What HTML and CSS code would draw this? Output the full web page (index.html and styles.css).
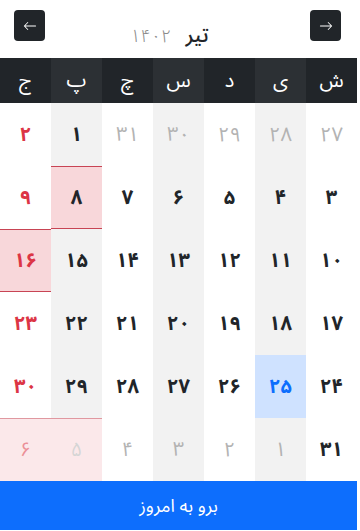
FILE: index.html
```html
<!DOCTYPE html>
<html lang="fa" dir="rtl">
<head>
    <meta charset="UTF-8">
    <meta name="viewport" content="width=device-width, initial-scale=1.0">
    <title>تقویم</title>
    <link rel="stylesheet" href="styles.css">
</head>
<body>
    <div class="calendar">
        <div class="cal-header">
            <button class="nav-btn" title="ماه بعد">
                <svg width="14" height="14" viewBox="0 0 16 16" fill="currentColor"><path d="M1 8a.5.5 0 0 1 .5-.5h11.793l-3.147-3.146a.5.5 0 0 1 .708-.708l4 4a.5.5 0 0 1 0 .708l-4 4a.5.5 0 0 1-.708-.708L13.293 8.5H1.5A.5.5 0 0 1 1 8z"/></svg>
            </button>
            <div class="cal-title">
                <span class="month">تیر</span>
                <span class="year">۱۴۰۲</span>
            </div>
            <button class="nav-btn" title="ماه قبل">
                <svg width="14" height="14" viewBox="0 0 16 16" fill="currentColor"><path d="M15 8a.5.5 0 0 0-.5-.5H2.707l3.147-3.146a.5.5 0 1 0-.708-.708l-4 4a.5.5 0 0 0 0 .708l4 4a.5.5 0 0 0 .708-.708L2.707 8.5H14.5A.5.5 0 0 0 15 8z"/></svg>
            </button>
        </div>

        <div class="weekdays">
            <div>ش</div><div>ی</div><div>د</div><div>س</div><div>چ</div><div>پ</div><div>ج</div>
        </div>

        <div class="days">
            <div class="day other">۲۷</div>
            <div class="day other">۲۸</div>
            <div class="day other">۲۹</div>
            <div class="day other">۳۰</div>
            <div class="day other">۳۱</div>
            <div class="day">۱</div>
            <div class="day friday">۲</div>

            <div class="day">۳</div>
            <div class="day">۴</div>
            <div class="day">۵</div>
            <div class="day">۶</div>
            <div class="day">۷</div>
            <div class="day holiday">۸</div>
            <div class="day friday">۹</div>

            <div class="day">۱۰</div>
            <div class="day">۱۱</div>
            <div class="day">۱۲</div>
            <div class="day">۱۳</div>
            <div class="day">۱۴</div>
            <div class="day">۱۵</div>
            <div class="day friday holiday">۱۶</div>

            <div class="day">۱۷</div>
            <div class="day">۱۸</div>
            <div class="day">۱۹</div>
            <div class="day">۲۰</div>
            <div class="day">۲۱</div>
            <div class="day">۲۲</div>
            <div class="day friday">۲۳</div>

            <div class="day">۲۴</div>
            <div class="day today">۲۵</div>
            <div class="day">۲۶</div>
            <div class="day">۲۷</div>
            <div class="day">۲۸</div>
            <div class="day">۲۹</div>
            <div class="day friday">۳۰</div>

            <div class="day">۳۱</div>
            <div class="day other">۱</div>
            <div class="day other">۲</div>
            <div class="day other">۳</div>
            <div class="day other">۴</div>
            <div class="day other holiday">۵</div>
            <div class="day other friday holiday">۶</div>
        </div>

        <button class="today-btn">برو به امروز</button>
    </div>
</body>
</html>
```

FILE: styles.css
```css
/* Reset */
* {
    box-sizing: border-box;
}

body {
    margin: 0;
    background: #fff;
    font-family: "Noto Sans Arabic", "DejaVu Sans", sans-serif;
    color: #212529;
}

.calendar {
    width: 357px;
    margin-left: 0;
    margin-right: auto;
}

/* Header */
.cal-header {
    height: 58px;
    display: flex;
    align-items: flex-start;
    justify-content: space-between;
    padding: 10px 16px 0 14px;
}

.nav-btn {
    width: 31px;
    height: 31px;
    border: none;
    border-radius: 4px;
    background: #212529;
    color: #fff;
    display: flex;
    align-items: center;
    justify-content: center;
    padding: 0;
    cursor: pointer;
}

.cal-title {
    display: flex;
    align-items: baseline;
    gap: 14px;
    margin-top: 3px;
    margin-right: 16px;
}

.cal-title .month {
    font-size: 21px;
    font-weight: 500;
}

.cal-title .year {
    font-size: 18px;
    color: #8a8a8a;
    font-weight: 300;
}

/* Week days */
.weekdays {
    display: grid;
    grid-template-columns: repeat(7, 51px);
    background: #212529;
    color: #fff;
}

.weekdays div {
    height: 45px;
    display: flex;
    align-items: center;
    justify-content: center;
    font-size: 20px;
}

.weekdays div:nth-child(even) {
    background: #2c3034;
}

/* Days */
.days {
    display: grid;
    grid-template-columns: repeat(7, 51px);
    grid-auto-rows: 63px;
}

.day {
    display: flex;
    align-items: center;
    justify-content: center;
    font-size: 20px;
    font-weight: bold;
    color: #212529;
}

.day:nth-child(7n+2),
.day:nth-child(7n+4),
.day:nth-child(7n+6) {
    background: #f2f2f2;
}

.day.friday {
    color: #dc3545;
}

.day.other {
    color: #b3b3b3;
    font-weight: normal;
}

.day.holiday {
    background: #f8d7da !important;
    border-top: 1px solid #c84454;
    border-bottom: 1px solid #c84454;
}

.day.other.holiday {
    opacity: 0.55;
    border-bottom: none;
}

.day.other.friday {
    color: #dc3545;
}

.day.today {
    background: #cfe2ff !important;
    color: #0d6efd;
}

/* Today button */
.today-btn {
    display: block;
    width: 100%;
    height: 49px;
    border: none;
    background: #0d6efd;
    color: #fff;
    font-family: inherit;
    font-size: 18px;
    cursor: pointer;
}
```
